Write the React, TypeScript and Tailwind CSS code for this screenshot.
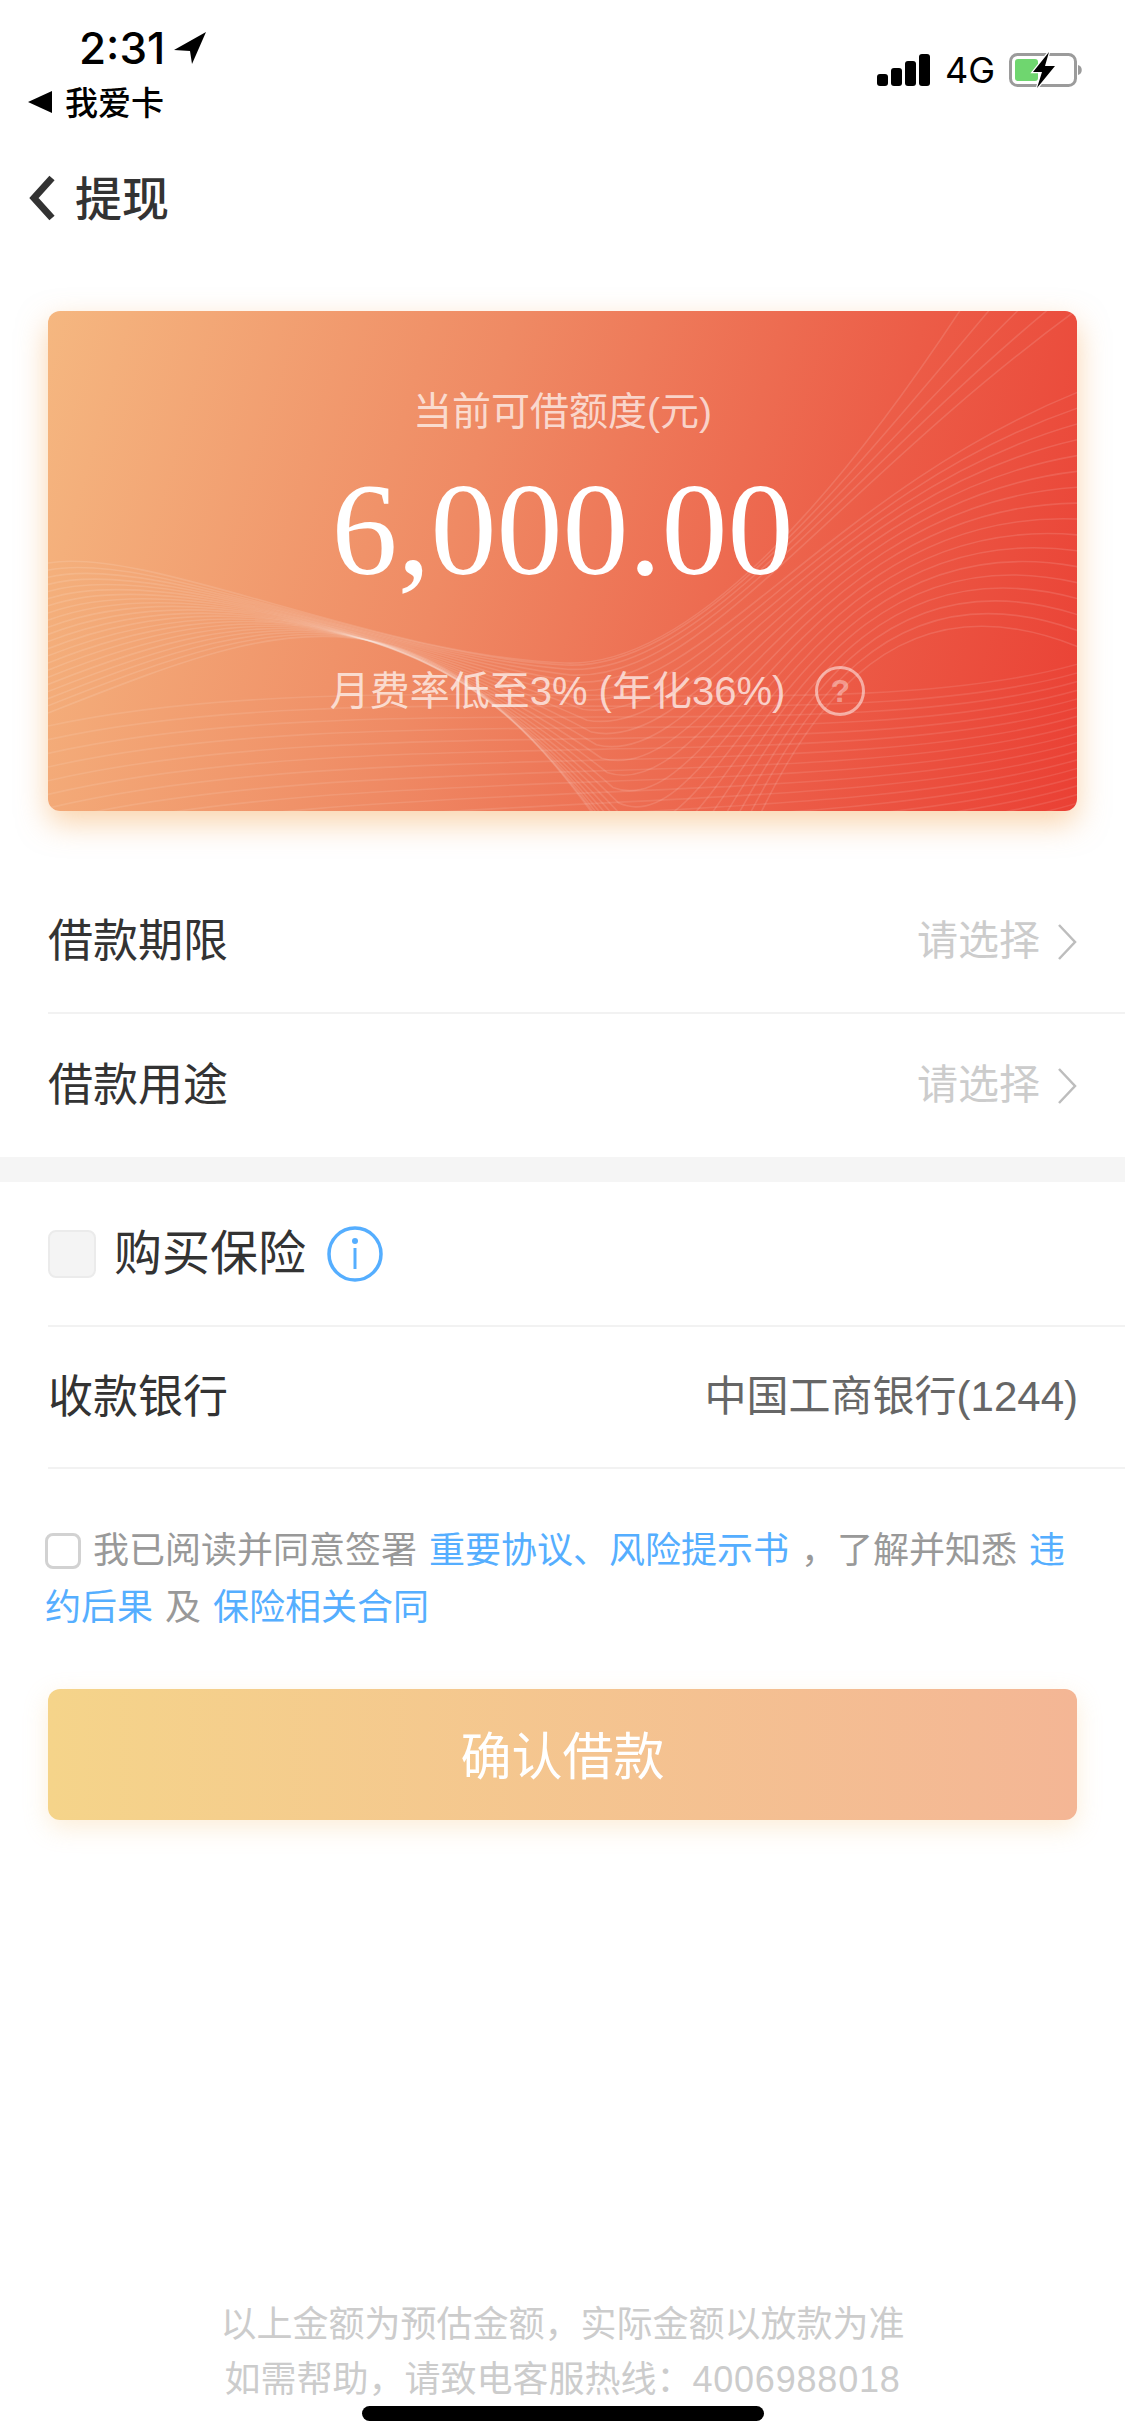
import React from 'react';

const base = { fontFamily: '"Liberation Sans", "Noto Sans CJK SC", sans-serif' };
const latin = { fontFamily: 'Inter, "Noto Sans CJK SC", sans-serif' };
const cjk = { fontFamily: '"Noto Sans CJK SC", sans-serif' };

// wave lines on the card, computed per strand
const steps = (n: number) => Array.from({ length: n }, (_, i) => i / (n - 1));

// strands that arch on the left, sag through the valley and fan out top right
const waveU = steps(22).map((s) => {
  const t = Math.pow(s, 1.6); // packs more strands along the valley edge
  const left = 252 + 150 * s;
  const mx = 517 + 103 * t;
  const my = 352 + 268 * t;
  const ex = 915 + 125 * Math.min(1, s * 5);
  const ey = s < 0.2 ? -5 : -5 + 345 * s;
  return [
    `M0 ${left}`,
    `C ${100 + 160 * t} ${235 + 65 * s}, ${330 + 70 * t} ${345 - 105 * t}, ${mx} ${my}`,
    `C ${647 + 43 * t} ${357 + 343 * t}, ${800 - 80 * s} ${170 + 30 * s}, ${ex} ${ey}`,
  ].join(' ');
});

// gentle strands from the lower left that dip and rise again at the right edge
const waveL = steps(20).map((t) => {
  const left = 415 + 260 * t;
  const ey = 350 + 165 * t;
  return `M0 ${left} C 320 ${left - 70 - 20 * t}, 800 ${ey + 75}, 1040 ${ey}`;
});

const Chevron = () => (
  <svg width="22" height="38" viewBox="0 0 22 38" fill="none">
    <path d="M3 2 L19 19 L3 36" stroke="#bdbdbd" strokeWidth="2.5" />
  </svg>
);

const Row = ({ label, children, last }: { label: string; children?: React.ReactNode; last?: boolean }) => (
  <div className={`ml-[48px] h-[143px] flex items-center justify-between pr-[47px] ${last ? '' : 'border-b-2 border-[#f2f2f2]'}`}>
    <span className="text-[45px] leading-none text-[#333333]">{label}</span>
    {children}
  </div>
);

export default function App() {
  return (
    <div className="relative w-[1125px] h-[2436px] bg-white overflow-hidden" style={base}>
      {/* status bar */}
      <div className="flex justify-between h-[140px]">
        <div className="pl-[28px] pt-[24px]">
          <div className="flex items-center pl-[51px] h-[48px]">
            <span className="text-[44px] leading-none font-medium text-black" style={latin}>2:31</span>
            <svg className="ml-[8px]" width="34" height="34" viewBox="0 0 34 34">
              <path d="M33 1 L1 19 L17 20 L19 33 Z" fill="#000" />
            </svg>
          </div>
          <div className="flex items-center mt-[13px]">
            <svg width="24" height="22" viewBox="0 0 24 22">
              <path d="M24 0 V22 L0 11 Z" fill="#000" />
            </svg>
            <span className="ml-[13px] text-[33px] leading-none font-medium text-black" style={cjk}>我爱卡</span>
          </div>
        </div>
        <div className="flex items-center h-[34px] mt-[53px] pr-[42px]">
          <div className="flex items-end gap-[3px] h-[32px]">
            <div className="w-[11px] h-[12px] rounded-[3px] bg-black" />
            <div className="w-[11px] h-[18px] rounded-[3px] bg-black" />
            <div className="w-[11px] h-[25px] rounded-[3px] bg-black" />
            <div className="w-[11px] h-[32px] rounded-[3px] bg-black" />
          </div>
          <span className="ml-[15px] text-[36px] leading-none text-black" style={latin}>4G</span>
          <svg className="ml-[14px]" width="74" height="36" viewBox="0 0 74 36" fill="none">
            <rect x="1.5" y="2.5" width="65" height="31" rx="7" stroke="#9b9b9b" strokeWidth="3" />
            <rect x="6" y="7" width="23" height="22" rx="3" fill="#6fd66f" />
            <path d="M69 13 C74 14 74 22 69 23 Z" fill="#9b9b9b" />
            <path d="M40 0 L24 20 L33 20 L28 36 L46 14 L36 14 Z" fill="#000" stroke="#fff" strokeWidth="2.5" paintOrder="stroke" />
          </svg>
        </div>
      </div>

      {/* title */}
      <div className="flex items-center h-[116px] pl-[28px]">
        <svg width="28" height="46" viewBox="0 0 28 46" fill="none">
          <path d="M24 3 L6 23 L24 43" stroke="#333" strokeWidth="7" />
        </svg>
        <span className="ml-[19px] mb-[6px] text-[47px] leading-none font-medium text-[#333333]" style={cjk}>提现</span>
      </div>

      {/* credit card */}
      <div className="mt-[55px] mx-[48px] h-[500px] rounded-[12px] relative overflow-hidden bg-[linear-gradient(106deg,#f5b780_0%,#ef8a64_40%,#ec5c47_75%,#ea4034_100%)] shadow-[0_12px_30px_rgba(245,170,90,0.5)]">
        <svg className="absolute inset-0" width="1029" height="500" viewBox="0 0 1029 500" fill="none">
          {waveU.map((d, i) => (
            <path key={i} d={d} stroke="#fff" strokeOpacity="0.12" strokeWidth="1.6" />
          ))}
          {waveL.map((d, i) => (
            <path key={i} d={d} stroke="#fff" strokeOpacity="0.1" strokeWidth="1.6" />
          ))}
        </svg>
        <div className="relative flex flex-col items-center">
          <div className="mt-[81px] text-[39px] leading-none text-white/70">当前可借额度(元)</div>
          <div className="mt-[33px] text-[132px] leading-none text-white" style={{ fontFamily: '"Liberation Serif", serif' }}>6,000.00</div>
          <div className="mt-[70px] ml-[70px] flex items-center text-white/70">
            <span className="text-[40px] leading-none">月费率低至3% (年化36%)</span>
            <span className="ml-[30px] w-[50px] h-[50px] rounded-full border-[3px] border-white/50 flex items-center justify-center text-[32px] leading-none font-bold text-white/40">?</span>
          </div>
        </div>
      </div>

      {/* form */}
      <div className="mt-[60px]">
        <Row label="借款期限">
          <div className="flex items-center gap-[16px]">
            <span className="text-[41px] leading-none text-[#cccccc]">请选择</span>
            <Chevron />
          </div>
        </Row>
        <Row label="借款用途" last>
          <div className="flex items-center gap-[16px]">
            <span className="text-[41px] leading-none text-[#cccccc]">请选择</span>
            <Chevron />
          </div>
        </Row>
      </div>
      <div className="h-[25px] bg-[#f5f5f5]" />
      <div className="ml-[48px] h-[145px] flex items-center border-b-2 border-[#f2f2f2]">
        <div className="w-[48px] h-[48px] rounded-[8px] bg-[#f4f4f4] border-2 border-[#ebebeb]" />
        <span className="ml-[18px] text-[48px] leading-none text-[#333333]">购买保险</span>
        <svg className="ml-[21px]" width="56" height="56" viewBox="0 0 56 56" fill="none">
          <circle cx="28" cy="28" r="26" stroke="#55aeff" strokeWidth="3.5" />
          <circle cx="28" cy="15" r="3" fill="#55aeff" />
          <path d="M28 22 V43" stroke="#55aeff" strokeWidth="3" />
        </svg>
      </div>
      <div className="ml-[48px] h-[142px] flex items-center justify-between pr-[47px] border-b-2 border-[#f2f2f2]">
        <span className="text-[45px] leading-none text-[#333333]">收款银行</span>
        <span className="text-[42px] leading-none text-[#666666]">中国工商银行(1244)</span>
      </div>

      {/* agreement */}
      <div className="mt-[53px] pl-[45px] pr-[48px] text-[36px] leading-[57px] text-[#999999]">
        <span className="inline-block align-[-6px] w-[36px] h-[36px] rounded-[8px] border-[3px] border-[#d2d2d2] mr-[12px]" />
        我已阅读并同意签署 <span className="mx-[2px] text-[#55aeff]">重要协议、风险提示书</span> ，了解并知悉 <span className="mx-[2px] text-[#55aeff]">违约后果</span> 及 <span className="mx-[2px] text-[#55aeff]">保险相关合同</span>
      </div>

      {/* submit */}
      <div className="mt-[53px] mx-[48px] h-[131px] pt-[6px] rounded-[12px] flex items-center justify-center bg-[linear-gradient(90deg,#f5d48a,#f4b695)] shadow-[0_8px_24px_rgba(245,200,130,0.3)]">
        <span className="text-[51px] leading-none text-white">确认借款</span>
      </div>

      {/* footer */}
      <div className="absolute bottom-[29px] left-0 right-0 text-center text-[36px] leading-[55px] text-[#cccccc]">
        <div>以上金额为预估金额，实际金额以放款为准</div>
        <div>如需帮助，请致电客服热线：<span className="tracking-[0.8px]">4006988018</span></div>
      </div>
      <div className="absolute bottom-[15px] left-[362px] w-[402px] h-[15px] rounded-full bg-black" />
    </div>
  );
}
